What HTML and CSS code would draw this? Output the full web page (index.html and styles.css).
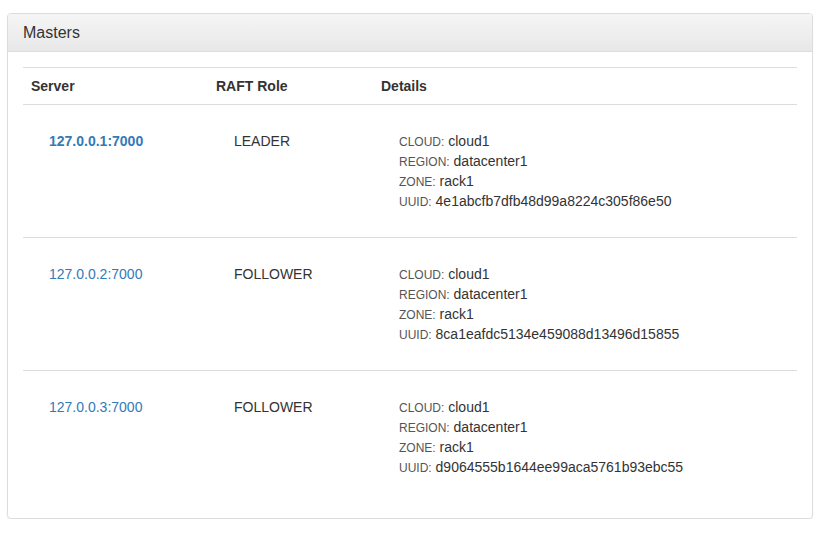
FILE: index.html
```html
<!DOCTYPE html>
<html>
<head>
<meta charset="utf-8">
<link rel="stylesheet" href="styles.css">
</head>
<body>
<div class="panel">
  <div class="panel-heading">Masters</div>
  <div class="panel-body">
    <table class="table">
      <thead>
        <tr><th class="c-server">Server</th><th class="c-role">RAFT Role</th><th>Details</th></tr>
      </thead>
      <tbody>
        <tr>
          <td><div class="cell"><a class="link bold" href="#">127.0.0.1:7000</a></div></td>
          <td><div class="cell">LEADER</div></td>
          <td><div class="cell">
            <div class="line"><span class="lbl">CLOUD:</span> cloud1</div>
            <div class="line"><span class="lbl">REGION:</span> datacenter1</div>
            <div class="line"><span class="lbl">ZONE:</span> rack1</div>
            <div class="line"><span class="lbl">UUID:</span> 4e1abcfb7dfb48d99a8224c305f86e50</div>
          </div></td>
        </tr>
        <tr>
          <td><div class="cell"><a class="link" href="#">127.0.0.2:7000</a></div></td>
          <td><div class="cell">FOLLOWER</div></td>
          <td><div class="cell">
            <div class="line"><span class="lbl">CLOUD:</span> cloud1</div>
            <div class="line"><span class="lbl">REGION:</span> datacenter1</div>
            <div class="line"><span class="lbl">ZONE:</span> rack1</div>
            <div class="line"><span class="lbl">UUID:</span> 8ca1eafdc5134e459088d13496d15855</div>
          </div></td>
        </tr>
        <tr>
          <td><div class="cell"><a class="link" href="#">127.0.0.3:7000</a></div></td>
          <td><div class="cell">FOLLOWER</div></td>
          <td><div class="cell">
            <div class="line"><span class="lbl">CLOUD:</span> cloud1</div>
            <div class="line"><span class="lbl">REGION:</span> datacenter1</div>
            <div class="line"><span class="lbl">ZONE:</span> rack1</div>
            <div class="line"><span class="lbl">UUID:</span> d9064555b1644ee99aca5761b93ebc55</div>
          </div></td>
        </tr>
      </tbody>
    </table>
  </div>
</div>
</body>
</html>
```

FILE: styles.css
```css
html, body {
  margin: 0;
  padding: 0;
  background: #fff;
}
body {
  padding: 13px 13px 0 7px;
  font-family: "Liberation Sans", Arial, sans-serif;
  font-size: 14px;
  line-height: 20px;
  color: #333;
}
.panel {
  border: 1px solid #ddd;
  border-radius: 4px;
  background: #fff;
  box-shadow: 0 1px 2px rgba(0,0,0,0.05);
  width: 804px;
}
.panel-heading {
  padding: 10px 15px;
  height: 17px;
  font-size: 16px;
  line-height: 17px;
  color: #333;
  background: linear-gradient(to bottom, #f5f5f5 0%, #e8e8e8 100%);
  border-bottom: 1px solid #ddd;
  border-radius: 3px 3px 0 0;
}
.panel-body {
  padding: 15px;
}
.table {
  width: 100%;
  border-collapse: collapse;
  border-spacing: 0;
  border-top: 1px solid #ddd;
}
.table th {
  text-align: left;
  font-weight: bold;
  padding: 8px;
  line-height: 20px;
  border-bottom: 1px solid #ddd;
}
.c-server { width: 169px; }
.c-role { width: 149px; }
.table td {
  padding: 8px;
  vertical-align: top;
}
.table tbody tr + tr td {
  border-top: 1px solid #ddd;
}
.cell {
  padding: 18px;
  line-height: 20px;
}
.line {
  height: 20px;
  line-height: 20px;
}
.link {
  color: #337ab7;
  text-decoration: none;
}
.bold { font-weight: bold; }
.lbl {
  font-size: 12px;
  line-height: 1;
  color: #555;
}
```
